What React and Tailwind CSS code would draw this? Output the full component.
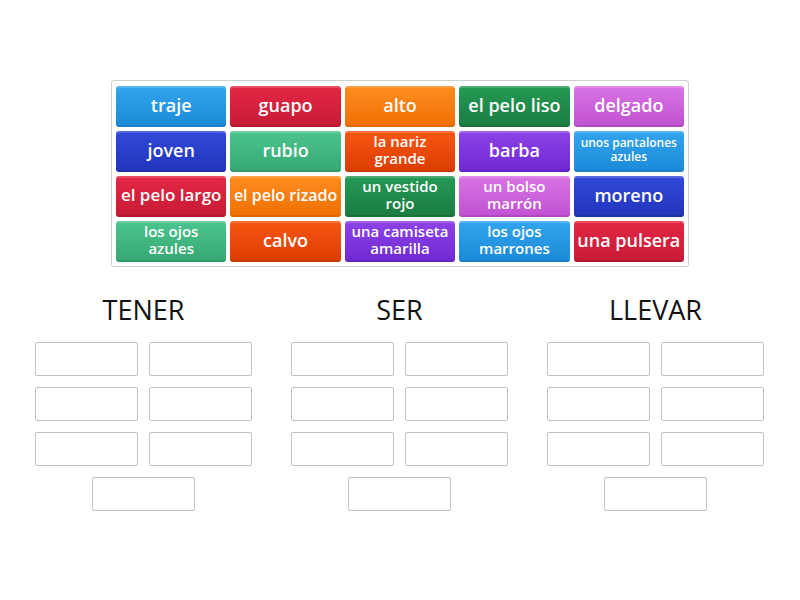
const tiles = [
  { text: "traje", c: "bg-linear-to-b from-[#33a4ee] to-[#1b8bd9] border-[#1680cc]", size: "big" },
  { text: "guapo", c: "bg-linear-to-b from-[#e42745] to-[#c71b35] border-[#b4172f]", size: "big" },
  { text: "alto", c: "bg-linear-to-b from-[#ff8d1f] to-[#f07000] border-[#de6600]", size: "big" },
  { text: "el pelo liso", c: "bg-linear-to-b from-[#249a54] to-[#1b7d42] border-[#17703b]", size: "big" },
  { text: "delgado", c: "bg-linear-to-b from-[#d874e3] to-[#c153d2] border-[#b048c1]", size: "big" },
  { text: "joven", c: "bg-linear-to-b from-[#3249da] to-[#2235bb] border-[#1e2fa9]", size: "big" },
  { text: "rubio", c: "bg-linear-to-b from-[#4cc48f] to-[#36a974] border-[#2f9b69]", size: "big" },
  { text: "la nariz\ngrande", c: "bg-linear-to-b from-[#f85612] to-[#dc3e02] border-[#c93800]", size: "two" },
  { text: "barba", c: "bg-linear-to-b from-[#8d43e8] to-[#7029d2] border-[#6424bf]", size: "big" },
  { text: "unos pantalones\nazules", c: "bg-linear-to-b from-[#33a4ee] to-[#1b8bd9] border-[#1680cc]", size: "small" },
  { text: "el pelo largo", c: "bg-linear-to-b from-[#e42745] to-[#c71b35] border-[#b4172f]", size: "fit" },
  { text: "el pelo rizado", c: "bg-linear-to-b from-[#ff8d1f] to-[#f07000] border-[#de6600]", size: "mid" },
  { text: "un vestido\nrojo", c: "bg-linear-to-b from-[#249a54] to-[#1b7d42] border-[#17703b]", size: "two" },
  { text: "un bolso\nmarrón", c: "bg-linear-to-b from-[#d874e3] to-[#c153d2] border-[#b048c1]", size: "two" },
  { text: "moreno", c: "bg-linear-to-b from-[#3249da] to-[#2235bb] border-[#1e2fa9]", size: "big" },
  { text: "los ojos\nazules", c: "bg-linear-to-b from-[#4cc48f] to-[#36a974] border-[#2f9b69]", size: "two" },
  { text: "calvo", c: "bg-linear-to-b from-[#f85612] to-[#dc3e02] border-[#c93800]", size: "big" },
  { text: "una camiseta\namarilla", c: "bg-linear-to-b from-[#8d43e8] to-[#7029d2] border-[#6424bf]", size: "two" },
  { text: "los ojos\nmarrones", c: "bg-linear-to-b from-[#33a4ee] to-[#1b8bd9] border-[#1680cc]", size: "two" },
  { text: "una pulsera", c: "bg-linear-to-b from-[#e42745] to-[#c71b35] border-[#b4172f]", size: "big" },
];

const sizes = {
  big: "text-[18px] leading-[20px]",
  fit: "text-[17px] leading-[20px]",
  mid: "text-[16px] leading-[18px]",
  two: "text-[15px] leading-[17px]",
  small: "text-[12px] leading-[14px]",
};

const groups = ["TENER", "SER", "LLEVAR"];

const Tile = ({ tile }) => (
  <div
    className={`h-[41px] rounded-[3px] border-b-2 pb-[2px] flex items-center justify-center text-center text-white font-semibold shadow-[inset_0_2px_0_rgba(255,255,255,0.18)] ${tile.c}`}
  >
    <span className={`whitespace-pre ${sizes[tile.size]}`}>{tile.text}</span>
  </div>
);

const Slot = () => (
  <div className="h-[34px] w-[103px] border border-[#c2c2c2] rounded-[2px] bg-white" />
);

const App = () => {
  return (
    <div className="w-[800px] h-[600px] bg-white font-['Open_Sans',sans-serif] pt-[80px]">
      {/* word bank */}
      <div className="mx-auto w-[578px] border border-[#cfcfcf] rounded-[3px] px-1 pt-[5px] pb-1">
        <div className="grid grid-cols-5 gap-x-1 gap-y-1">
          {tiles.map((t) => (
            <Tile key={t.text} tile={t} />
          ))}
        </div>
      </div>

      {/* drop groups */}
      <div className="flex justify-center gap-[39px] mt-[27px] pr-[1px]">
        {groups.map((g) => (
          <div key={g} className="w-[217px] flex flex-col items-center">
            <div className="text-[27px] leading-[32px] text-[#111]">{g}</div>
            <div className="grid grid-cols-2 gap-[11px] mt-[16px]">
              {[0, 1, 2, 3, 4, 5].map((i) => (
                <Slot key={i} />
              ))}
            </div>
            <div className="mt-[11px]">
              <Slot />
            </div>
          </div>
        ))}
      </div>
    </div>
  );
};

export default App;
